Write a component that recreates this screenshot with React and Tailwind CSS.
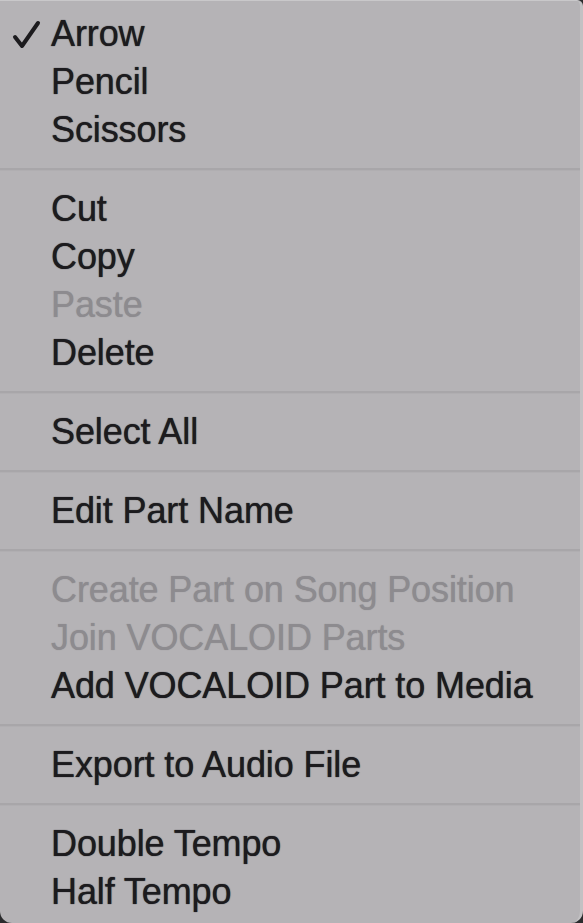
const SECTIONS = [
  [
    { label: "Arrow", checked: true },
    { label: "Pencil" },
    { label: "Scissors" },
  ],
  [
    { label: "Cut" },
    { label: "Copy" },
    { label: "Paste", disabled: true },
    { label: "Delete" },
  ],
  [{ label: "Select All" }],
  [{ label: "Edit Part Name" }],
  [
    { label: "Create Part on Song Position", disabled: true },
    { label: "Join VOCALOID Parts", disabled: true },
    { label: "Add VOCALOID Part to Media" },
  ],
  [{ label: "Export to Audio File" }],
  [{ label: "Double Tempo" }, { label: "Half Tempo" }],
];

const Check = () => (
  <svg
    viewBox="0 0 30 30"
    className="absolute left-[11px] top-[10px] w-[30px] h-[30px]"
    fill="none"
    stroke="#1c1b1e"
    strokeWidth="4"
    strokeLinecap="round"
    strokeLinejoin="round"
  >
    <path d="M4 17 L11 26 L27 3" />
  </svg>
);

const MenuItem = ({ label, checked, disabled }) => (
  <div
    className={`relative h-[48px] flex items-center pl-[51px] text-[36px] leading-[48px] whitespace-nowrap tracking-[-0.1px] [text-shadow:0_0_1px_currentColor] ${
      disabled ? "text-[#8d8b8f]" : "text-[#1c1b1e]"
    }`}
  >
    {checked && <Check />}
    {label}
  </div>
);

const Separator = () => (
  <div className="h-[31px] flex items-center">
    <div className="w-full h-[3px] bg-[#a8a6a9] border-b border-[#b0aeb1]" />
  </div>
);

export default function App() {
  return (
    <div className="w-[583px] h-[923px] bg-[#2b2b2d]">
      <div
        className="h-full flex flex-col pt-[9px] bg-[#b5b3b6] rounded-b-[12px] rounded-tr-[6px] border-t border-[#c9c8ca] border-r-[3px] border-r-[#c2c1c3]"
        style={{ fontFamily: '"Liberation Sans", Arial, sans-serif' }}
      >
        {SECTIONS.map((items, i) => (
          <div key={i}>
            {i > 0 && <Separator />}
            {items.map((it) => (
              <MenuItem key={it.label} {...it} />
            ))}
          </div>
        ))}
      </div>
    </div>
  );
}
